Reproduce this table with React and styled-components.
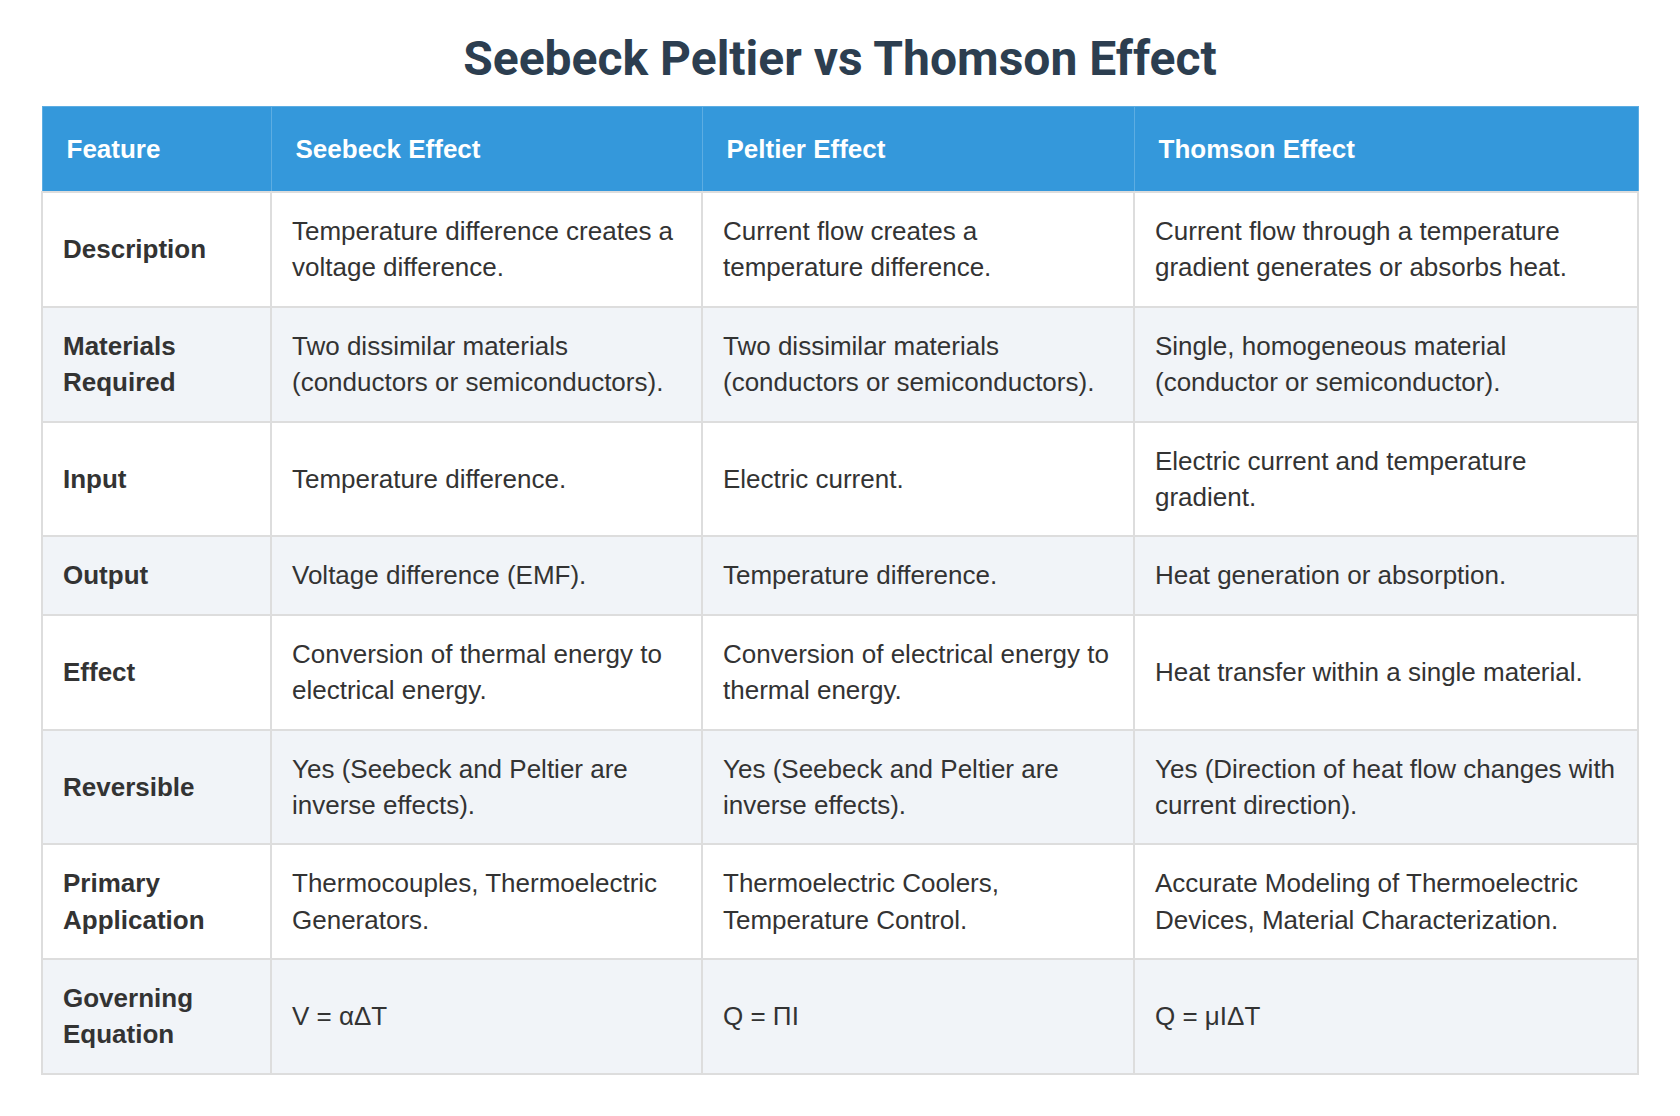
import React from 'react';
import styled, { createGlobalStyle } from 'styled-components';

const GlobalStyle = createGlobalStyle`
  html, body {
    margin: 0;
    padding: 0;
    background: #ffffff;
  }
`;

const Page = styled.div`
  padding: 30px 41px 40px;
  font-family: 'Liberation Sans', Arial, sans-serif;
`;

const Title = styled.h1`
  margin: 0 0 18px;
  font-family: Roboto, 'Liberation Sans', sans-serif;
  font-size: 48px;
  font-weight: 700;
  line-height: 1.2;
  color: #2c3e50;
  text-align: center;
`;

const Table = styled.table`
  width: 100%;
  border-collapse: collapse;
  table-layout: fixed;
  font-size: 26px;
  line-height: 1.4;
`;

const HeadCell = styled.th`
  padding: 24px 24px;
  background: #3498db;
  color: #ffffff;
  font-weight: 700;
  text-align: left;
  border: 1px solid #5dade2;
  border-bottom: 2px solid #dddddd;
`;

const Row = styled.tr`
  background: ${({ $striped }) => ($striped ? '#f1f4f8' : '#ffffff')};
`;

const Cell = styled.td`
  padding: 20px 20px;
  border: 2px solid #dddddd;
  color: #333333;
  vertical-align: middle;
  font-weight: ${({ $feature }) => ($feature ? 700 : 400)};
`;

const columns = ['Feature', 'Seebeck Effect', 'Peltier Effect', 'Thomson Effect'];
const widths = [229, 431, 432, null];

const rows = [
  [
    'Description',
    'Temperature difference creates a voltage difference.',
    'Current flow creates a temperature difference.',
    'Current flow through a temperature gradient generates or absorbs heat.',
  ],
  [
    'Materials Required',
    'Two dissimilar materials (conductors or semiconductors).',
    'Two dissimilar materials (conductors or semiconductors).',
    'Single, homogeneous material (conductor or semiconductor).',
  ],
  ['Input', 'Temperature difference.', 'Electric current.', 'Electric current and temperature gradient.'],
  ['Output', 'Voltage difference (EMF).', 'Temperature difference.', 'Heat generation or absorption.'],
  [
    'Effect',
    'Conversion of thermal energy to electrical energy.',
    'Conversion of electrical energy to thermal energy.',
    'Heat transfer within a single material.',
  ],
  [
    'Reversible',
    'Yes (Seebeck and Peltier are inverse effects).',
    'Yes (Seebeck and Peltier are inverse effects).',
    'Yes (Direction of heat flow changes with current direction).',
  ],
  [
    'Primary Application',
    'Thermocouples, Thermoelectric Generators.',
    'Thermoelectric Coolers, Temperature Control.',
    'Accurate Modeling of Thermoelectric Devices, Material Characterization.',
  ],
  ['Governing Equation', 'V = αΔT', 'Q = ΠI', 'Q = μIΔT'],
];

export default function App() {
  return (
    <Page>
      <GlobalStyle />
      <Title>Seebeck Peltier vs Thomson Effect</Title>
      <Table>
        <colgroup>
          {widths.map((w, i) => (
            <col key={i} style={w ? { width: w } : undefined} />
          ))}
        </colgroup>
        <thead>
          <tr>
            {columns.map((c) => (
              <HeadCell key={c}>{c}</HeadCell>
            ))}
          </tr>
        </thead>
        <tbody>
          {rows.map((r, i) => (
            <Row key={r[0]} $striped={i % 2 === 1}>
              {r.map((v, j) => (
                <Cell key={j} $feature={j === 0}>
                  {v}
                </Cell>
              ))}
            </Row>
          ))}
        </tbody>
      </Table>
    </Page>
  );
}
